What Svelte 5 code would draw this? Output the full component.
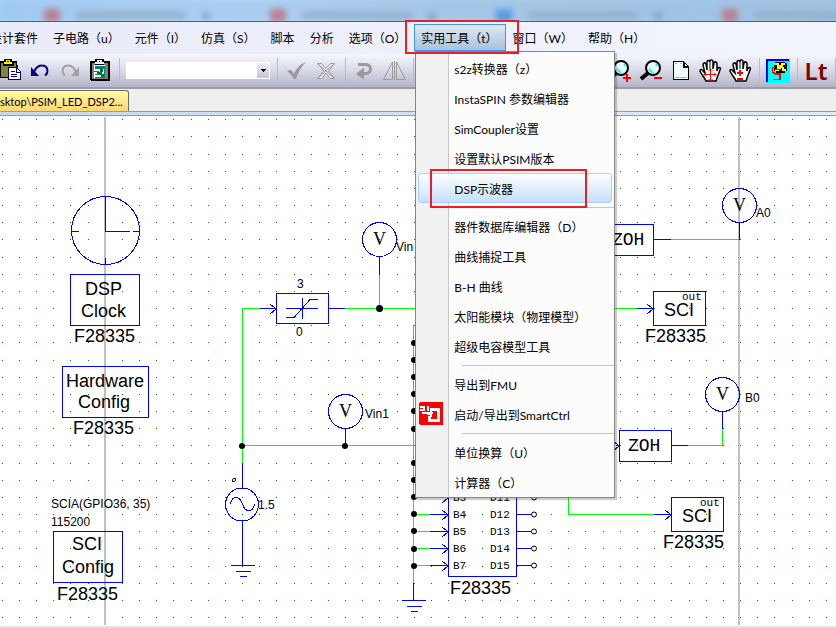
<script lang="ts">
  type Item = { label: string; icon?: boolean } | null;

  const menusBefore = ['设计套件', '子电路（u）', '元件（I）', '仿真（S）', '脚本', '分析', '选项（O）'];
  const menusAfter = ['窗口（W）', '帮助（H）'];

  // null draws a separator
  const toolItems: Item[] = [
    { label: 's2z转换器（z）' },
    { label: 'InstaSPIN 参数编辑器' },
    { label: 'SimCoupler设置' },
    { label: '设置默认PSIM版本' },
    { label: 'DSP示波器' },
    null,
    { label: '器件数据库编辑器（D）' },
    { label: '曲线捕捉工具' },
    { label: 'B-H 曲线' },
    { label: '太阳能模块（物理模型）' },
    { label: '超级电容模型工具' },
    null,
    { label: '导出到FMU' },
    { label: '启动/导出到SmartCtrl', icon: true },
    null,
    { label: '单位换算（U）' },
    { label: '计算器（C）' },
  ];

  let open = $state(true);
  let selected = $state('DSP示波器');

  const browserTabs = [1, 2, 3, 4];

  const pitch = 17.17;
  let dots = '';
  for (let j = 0; j < 30; j++) {
    for (let i = 0; i < 120; i++) {
      dots += `M${Math.floor(2.2 + i * pitch)} ${Math.floor(3.7 + j * pitch)}h1v1h-1z`;
    }
  }

  const railNodes = [227, 244, 261, 278, 295, 313, 347, 364, 381, 398, 415, 433, 450];
  const pins = [
    { y: 381, left: 'B3', right: 'D11' },
    { y: 398, left: 'B4', right: 'D12' },
    { y: 415, left: 'B5', right: 'D13' },
    { y: 432, left: 'B6', right: 'D14' },
    { y: 449, left: 'B7', right: 'D15' },
  ];
  const meters = [
    { x: 379, y: 123, name: 'Vin', nx: 396, ny: 135 },
    { x: 345, y: 295, name: 'Vin1', nx: 365, ny: 302 },
    { x: 739, y: 89, name: 'A0', nx: 756, ny: 101 },
    { x: 722, y: 278, name: 'B0', nx: 745, ny: 286 },
  ];
</script>

{#snippet arrow(x: number, y: number)}
  <path d="M{x - 6} {y - 4}l2 1 4 3.5-4 3.5-2 1M{x - 3} {y}h3" />
{/snippet}

{#snippet ground(x: number, y: number)}
  <path d="M{x - 12} {y}h24M{x - 7} {y + 6}h15M{x - 3} {y + 11}h7" />
{/snippet}

{#snippet outBox(x: number, y: number)}
  <rect class="box" x={x + 0.5} y={y + 0.5} width="52" height="34" />
  <text class="pin" x={x + 29} y={y + 9}>out</text>
  <text class="big" x={x + 11} y={y + 25}>SCI</text>
  <text class="big" x={x - 8} y={y + 51}>F28335</text>
{/snippet}

<div class="app">
  <div class="browser">
    {#each browserTabs as tab}
      <div class="browser-tab">
        <i class="favicon" class:blue={tab === 3}></i>
        <i class="title"></i>
        <i class="close"></i>
      </div>
    {/each}
  </div>

  <nav class="menubar">
    {#each menusBefore as menu}
      <button class="menu">{menu}</button>
    {/each}
    <div class="menu-open">
      <button class="menu" class:active={open} onclick={() => (open = !open)}>实用工具（t）</button>
      <span class="mark mark-menu"></span>
      {#if open}
        <div class="dropdown">
          {#each toolItems as item}
            {#if item}
              <button
                class="item"
                class:selected={item.label === selected}
                onmouseenter={() => (selected = item.label)}
              >
                <span class="item-icon">
                  {#if item.icon}
                    <svg width="24" height="24" shape-rendering="crispEdges">
                      <path fill="#f00" d="M1 0h22l1 1v21l-1 1H1l-1-1V1z" />
                      <path fill="none" stroke="#fff" stroke-width="3" d="M13 7.500h6.500v11h-9V14" />
                      <path fill="none" stroke="#fff" stroke-width="2" d="M1 5h3M1 8h3M5 4v5M3 11h11M9 4v5" />
                      <path fill="#fff" d="M8 10h5v3H8zM11 6h2v9h-2z" />
                    </svg>
                  {/if}
                </span>
                <span>{item.label}</span>
              </button>
            {:else}
              <hr />
            {/if}
          {/each}
          <span class="mark mark-item"></span>
        </div>
      {/if}
    </div>
    {#each menusAfter as menu}
      <button class="menu">{menu}</button>
    {/each}
  </nav>

  <div class="toolbar">
    <button class="tool" aria-label="Paste">
      <svg width="24" height="24" shape-rendering="crispEdges">
        <path fill="#000" d="M2 2h4V0h8v2h5v4h1v13H2z" />
        <path fill="#85853a" d="M3 4h15v14H3z" />
        <path fill="#000" d="M5 3h11v4H5z" />
        <path fill="#ff0" d="M8 1h4v2h2v2H6V3h2z" />
        <path fill="#000" d="M9 2h2v1H9z" />
        <path fill="#fff" stroke="#000080" d="M10.500 8.500h8l4 4v8h-12z" />
        <path stroke="#000080" d="M13 12.500h4M13 15.500h6M13 17.500h6M18.500 9v4h4" fill="none" />
      </svg>
    </button>
    <button class="tool" aria-label="Undo">
      <svg width="24" height="24">
        <path fill="none" stroke="#000080" stroke-width="2" d="M6 13c1-3 4-7 8-6.500 6 0 7 7 3 10" />
        <path fill="#000080" d="M3 8v9h8z" />
      </svg>
    </button>
    <button class="tool" aria-label="Redo">
      <svg width="24" height="24">
        <path fill="none" stroke="#a0a0a0" stroke-width="2" d="M18 13c-1-3-4-7-8-6.500-6 0-7 7-3 10" />
        <path fill="#a0a0a0" d="M21 8v9h-8z" />
      </svg>
    </button>
    <button class="tool" aria-label="Clipboard">
      <svg width="24" height="24" shape-rendering="crispEdges">
        <path fill="#000" d="M2 2h5V0h9v2h6v20H3l-1-1z" />
        <path fill="#808080" d="M4 4h16v16H4z" />
        <path fill="#fff" d="M6 6h11v13H6zM9 1h5v2h2v2H7V3h2z" />
        <path fill="#000" d="M11 2h1v1h-1zM7 5h9v1H7z" />
        <path fill="#008080" d="M7 7h10v3H7zM6 12h5v1H6zM7 15h6v1H7zM7 18h10v1H7zM16 9h1v9h-1z" />
        <path fill="#008000" d="M12 10h3v3h-3zM9 13h5v2H9zM13 15h3v3h-3z" />
      </svg>
    </button>
    <span class="sep"></span>
    <div class="combo">
      <select aria-label="Parameter"><option></option></select>
      <span class="combo-arrow"><svg width="5" height="3" shape-rendering="crispEdges"><path d="M0 0h5v1H4v1H3v1H2V2H1V1H0z" /></svg></span>
    </div>
    <span class="sep"></span>
    <button class="tool" aria-label="Apply">
      <svg width="24" height="24"><path fill="#999" d="M3 12l4-1 3 4C12 10 16 5 22 3c-5 5-8 10-10 17H10C8 17 6 14 3 12z" /></svg>
    </button>
    <button class="tool" aria-label="Cancel">
      <svg width="24" height="24">
        <path fill="#eee" stroke="#999" d="M3.500 4.500h4l4.500 5 4.500-5h4l-6 7.500 6 7.500h-4L12 14l-4.500 5.500h-4L10 12z" />
        <path stroke="#999" d="M4 5l16 14M20 5L4 19" />
      </svg>
    </button>
    <span class="sep"></span>
    <button class="tool" aria-label="Rotate">
      <svg width="24" height="24">
        <path fill="none" stroke="#999" stroke-width="3" d="M6 5.500h8c6 0 6 9 0 9h-3" />
        <path fill="#999" d="M12 8.500v12L4 15z" />
      </svg>
    </button>
    <button class="tool" aria-label="Mirror">
      <svg width="24" height="24"><path fill="none" stroke="#999" d="M10.500 3v17.500h-9zM14.500 3v17.500h9zM12.500 2v19" /></svg>
    </button>
    <span class="sep"></span>
    {#each ['Wire', 'Label', 'Text', 'Run', 'Zoom fit', 'Zoom area'] as name}
      <button class="tool" aria-label={name}></button>
    {/each}
    <span class="sep"></span>
    <button class="tool" aria-label="Zoom in">
      <svg width="24" height="24">
        <circle cx="13" cy="9" r="7" fill="#e8f8ff" stroke="#000" stroke-width="2" />
        <path stroke="#0ff" stroke-width="2" d="M9 10l4 4M16 5l2 2" />
        <path stroke="#000" stroke-width="4" d="M8 14l-6 6" />
        <path stroke="#f00" stroke-width="2" d="M15 19h8M19 15v8" />
      </svg>
    </button>
    <button class="tool" aria-label="Zoom out">
      <svg width="24" height="24">
        <circle cx="15" cy="9" r="7" fill="#e8f8ff" stroke="#000" stroke-width="2" />
        <path stroke="#0ff" stroke-width="2" d="M11 10l4 4M18 5l2 2" />
        <path stroke="#000" stroke-width="4" d="M10 14l-7 6" />
        <path stroke="#f00" stroke-width="2" d="M16 19h8" />
      </svg>
    </button>
    <button class="tool" aria-label="New page">
      <svg width="24" height="24" shape-rendering="crispEdges">
        <path fill="#f2fbff" stroke="#000" d="M5.500 2.500h10l5 5v13h-15z" />
        <path fill="none" stroke="#000" d="M15.500 3v5h5M16.500 3v4h4" />
        <path stroke="#0ff" d="M7 18.500h12M7 4.500h2M12 4.500h2" />
      </svg>
    </button>
    {#each ['Pan', 'Adjust'] as name}
      <button class="tool" aria-label={name}>
        <svg width="24" height="24">
          <path
            fill="#fff"
            stroke="#000"
            stroke-width="1.500"
            d="M8 22c-1-3-5-7-6-10 0-2 2-2 3 0l2 2-2-8c0-2 2-3 3-1l1 6V3c0-2 3-2 3 0V2c0-2 3-1 3 0v8l1-6c1-2 3-1 3 1v7l1-3c2-1 3 0 2 2l-3 8-1 3z"
          />
          <path stroke="#000" d="M12 3v7" />
          {#if name === 'Pan'}
            <path fill="none" stroke="#f00" d="M6 15.500h12M12.500 10v12M10.500 12l2-2 2 2M10.500 20l2 2 2-2M8 13.500l-2 2 2 2M16 13.500l2 2-2 2" />
          {:else}
            <path stroke="#f00" stroke-width="2" d="M9 14h6M12 11v6M9 20h6" />
          {/if}
        </svg>
      </button>
    {/each}
    <span class="sep"></span>
    <button class="tool" aria-label="Simview">
      <svg width="24" height="24" shape-rendering="crispEdges">
        <path fill="#0ff" d="M0 0h24v24H0z" />
        <path fill="#00f" d="M0 0h23v2H0zM0 0h2v23H0z" />
        <path fill="#000" d="M9 3h10v1h2v8h-2v2h-9v-2H8V6h1z" />
        <path fill="none" stroke="#ff0" stroke-width="2" d="M9 5h3v2h3M19 5h-3v4M9 11h3V9h3M20 11h-3V8" />
        <path fill="none" stroke="#f00" d="M9 8.500H6.500v5H9M9 10.500h6M7 14.500h7.500v6H7M9 15.500h4M13.500 15v5" />
      </svg>
    </button>
    <span class="sep"></span>
    <button class="tool lt">Lt</button>
    <span class="sep"></span>
  </div>

  <div class="tabs">
    <button class="doc-tab">sktop\PSIM_LED_DSP2...</button>
  </div>
  <div class="frame"></div>

  <main class="canvas">
    <svg class="sheet" width="100%" height="509">
      <path class="dots" d={dots} />
      <path class="page-line" d="M105 1v508M739 1v508" />

      <g class="wire">
        <path d="M260 192.500h-17.500V347M345 192.500h95M379.500 159v33M242 329.500h172M413.500 209v258" />
        <path d="M671 123.500h68M600 192.500h37M688 329.500h34.500V313M568.500 370v28.500H654" />
        {#each pins as pin}
          <path d="M414 {pin.y + 0.5}h16" />
        {/each}
      </g>

      <g class="part">
        <!-- DSP clock -->
        <circle cx="105.500" cy="114.500" r="34" />
        <path d="M105.500 80v35.500H130M133 115.500h7M71 115.500h8M105.500 142v7" />
        <rect x="70.500" y="158.500" width="69" height="51" />
        <rect x="62.500" y="250.500" width="86" height="51" />
        <rect x="53.500" y="415.500" width="69" height="51" />

        <!-- limiter -->
        <rect x="276.500" y="177.500" width="52" height="30" />
        <path d="M260 192.500h16M329 192.500h16M286 192.500h32M302.500 182v21" />
        <path d="M286 201.500h8l16-18h8" />
        {@render arrow(276, 192.5)}

        <!-- voltage source -->
        <path d="M242.500 347v25M242.500 405v44" />
        <circle cx="242" cy="388.500" r="16.500" />
        <circle cx="234" cy="364" r="1.500" />
        <path d="M230.500 388c1-8 9-9 12 0s10 9 12 0" />
        {@render ground(243, 449.5)}
        <path d="M413.500 467v17" />
        {@render ground(414, 484.5)}

        <!-- target board -->
        <rect x="448.500" y="180.500" width="68" height="280" />
        {#each pins as pin}
          <path d="M430 {pin.y + 0.5}h18M517 {pin.y + 0.5}h14" />
          {@render arrow(448, pin.y + 0.5)}
        {/each}

        <rect x="601.500" y="108.500" width="52" height="31" />
        <rect x="619.500" y="314.500" width="52" height="31" />
        <path d="M654 123.500h17M739.500 106v18M672 329.500h16M722.500 296v17M637 192.500h16M654 398.500h17M379.500 141v18M345.500 312v17" />
        {@render arrow(619, 329.5)}
        {@render arrow(653, 192.5)}
        {@render arrow(671, 398.5)}
        {#each meters as meter}
          <circle cx={meter.x + 0.5} cy={meter.y + 0.5} r="17" />
        {/each}
      </g>

      {@render outBox(653, 175)}
      {@render outBox(671, 381)}

      {#each railNodes as y}
        <circle cx="414" cy={y} r="3" />
      {/each}
      <circle cx="379.500" cy="192.500" r="3.500" />
      <circle cx="242" cy="330" r="3" />
      <circle cx="345" cy="330" r="3" />

      {#each meters as meter}
        <text class="volt" x={meter.x - 6} y={meter.y + 6}>V</text>
        <text class="small" x={meter.nx} y={meter.ny}>{meter.name}</text>
      {/each}

      {#each pins as pin}
        <circle class="terminal" cx="534" cy={pin.y + 0.5} r="2.500" />
        <text class="pin" x="453" y={pin.y + 4}>{pin.left}</text>
        <text class="pin" x="490" y={pin.y + 4}>{pin.right}</text>
      {/each}

      <text class="big" x="85" y="179">DSP</text>
      <text class="big" x="81" y="201">Clock</text>
      <text class="big" x="74" y="226">F28335</text>
      <text class="big" x="66" y="271">Hardware</text>
      <text class="big" x="78" y="292">Config</text>
      <text class="big" x="73" y="318">F28335</text>
      <text class="small" x="51" y="392">SCIA(GPIO36, 35)</text>
      <text class="small" x="51" y="410">115200</text>
      <text class="big" x="72" y="434">SCI</text>
      <text class="big" x="62" y="457">Config</text>
      <text class="big" x="57" y="484">F28335</text>
      <text class="big" x="450" y="478">F28335</text>
      <text class="small" x="297" y="172">3</text>
      <text class="small" x="296" y="220">0</text>
      <text class="small" x="258" y="393">1.5</text>
      <text class="block" x="612" y="129">ZOH</text>
      <text class="block" x="628" y="335">ZOH</text>
    </svg>
  </main>
  <div class="bottom"></div>
</div>

<style>
  :global(body) {
    margin: 0;
    background: #fff;
  }

  .app {
    min-height: 100vh;
    display: flex;
    flex-direction: column;
    overflow: hidden;
    font-family: Lato, 'Noto Sans CJK SC', sans-serif;
    font-size: 12px;
    color: #000;
  }

  button {
    font: inherit;
    color: inherit;
    border: none;
    background: none;
    padding: 0;
    white-space: nowrap;
  }

  .browser {
    display: flex;
    height: 21px;
    overflow: hidden;
    background: linear-gradient(90deg, #a9d3fa, #b5d8fb 30%, #add0f0 50%, #a5c8e8);
    border-bottom: 1px solid #50606f;
  }

  .browser-tab {
    display: flex;
    flex: 0 0 226px;
    align-items: center;
    gap: 16px;
    box-sizing: border-box;
    padding: 10px 16px 0 44px;
    background: rgba(130, 165, 200, 0.2);
    filter: blur(3px);
  }

  .favicon {
    width: 16px;
    height: 13px;
    background: #b8808f;
  }

  .favicon.blue {
    background: #5a98de;
  }

  .title {
    flex: 1;
    height: 7px;
    background: #92aec9;
  }

  .close {
    width: 8px;
    height: 6px;
    background: #7f9ab5;
  }

  .menubar {
    display: flex;
    align-items: flex-start;
    box-sizing: border-box;
    height: 32px;
    padding-top: 2px;
    margin-left: -17px;
    background: linear-gradient(90deg, #e9ebf9, #f2f4fd);
  }

  .menu {
    display: block;
    height: 27px;
    padding: 0 8px 0 7px;
    flex: none;
  }

  .menu.active {
    background: linear-gradient(#e4eaf2, #c3d5e7 50%, #a4c1dc);
    box-shadow: inset 0 0 0 1px #3c96f0;
  }

  .menu-open {
    position: relative;
    flex: none;
  }

  .mark {
    position: absolute;
    border: 2px solid #ee1c25;
    pointer-events: none;
  }

  .mark-menu {
    inset: -4px -13px -3px -9px;
    z-index: 3;
  }

  .mark-item {
    top: 117px;
    left: 14px;
    right: 27px;
    height: 35px;
  }

  .dropdown {
    position: absolute;
    z-index: 2;
    top: 27px;
    left: 1px;
    width: 198px;
    padding: 1px 0 0;
    border: 1px solid #868686;
    background: linear-gradient(90deg, #f1f1f1 32px, #c8c8c8 32px, #c8c8c8 33px, #fcfcfc 33px);
    box-shadow: 2px 2px 1px rgba(0, 0, 0, 0.2);
  }

  .item {
    display: flex;
    align-items: center;
    box-sizing: border-box;
    width: 194px;
    height: 30px;
    margin: 0 2px;
    border: 1px solid transparent;
    border-radius: 3px;
  }

  .item.selected {
    border-color: #aecff7;
    background: linear-gradient(#fbfdff, #e3f0fd 50%, #c4e1fd);
  }

  .item-icon {
    display: flex;
    width: 35px;
    flex: none;
  }

  hr {
    height: 1px;
    margin: 4px 0 3px 46px;
    border: none;
    background: #c5c5c5;
  }

  .toolbar {
    display: flex;
    align-items: center;
    height: 33px;
    margin-left: -5px;
    background: linear-gradient(#f6f7fc, #dcdde9 45%, #b4b4c9);
    border-bottom: 2px solid #9b9ba3;
  }

  .tool {
    display: flex;
    align-items: center;
    justify-content: center;
    width: 30px;
    height: 30px;
    flex: none;
  }

  .lt {
    font-family: 'Noto Sans', sans-serif;
    font-size: 24px;
    font-weight: 600;
    color: #800000;
  }

  .sep {
    width: 1px;
    height: 26px;
    margin: 0 3px 0 4px;
    flex: none;
    background: #b9bac8;
  }

  .combo {
    display: grid;
    grid-template-columns: 1fr 13px;
    width: 144px;
    height: 17px;
    margin: 0 3px;
    flex: none;
    background: #fff;
  }

  select {
    grid-area: 1 / 1 / 2 / 3;
    min-width: 0;
    height: 17px;
    appearance: none;
    border: none;
    background: none;
    font: inherit;
  }

  .combo-arrow {
    grid-area: 1 / 2;
    display: flex;
    height: 15px;
    margin: 1px 1px 1px 0;
    align-items: center;
    justify-content: center;
    background: linear-gradient(#f0f1f8, #c3c4d6);
    pointer-events: none;
  }

  .tabs {
    display: flex;
    align-items: flex-end;
    height: 22px;
    background: #efefef;
    border-bottom: 1px solid #9a9a9a;
  }

  .doc-tab {
    box-sizing: border-box;
    width: 129px;
    height: 21px;
    font-size: 11px;
    text-align: left;
    border: 1px solid #6c6c6c;
    border-width: 1px 1px 0 0;
    border-radius: 0 3px 0 0;
    background: linear-gradient(#fffb9f, #ffe88c 50%, #ffd873);
  }

  .frame {
    height: 3px;
    background: linear-gradient(90deg, #c9d8ee, #e2ecf8);
    border-bottom: 1px solid #9a9a9a;
  }

  .canvas {
    flex: 1;
    background: #fff;
  }

  .sheet {
    display: block;
  }

  .dots {
    fill: #008000;
    shape-rendering: crispEdges;
  }

  .page-line {
    stroke: #c0c0c0;
    stroke-width: 2;
  }

  .wire path {
    fill: none;
    stroke: #0f0;
    shape-rendering: crispEdges;
  }

  .part path,
  .part circle,
  .part rect,
  .box {
    fill: none;
    stroke: #00f;
    shape-rendering: crispEdges;
  }

  .terminal {
    fill: #fff;
    stroke: #000;
  }

  .big,
  .small {
    font-family: 'Liberation Sans', sans-serif;
  }

  .big {
    font-size: 18px;
  }

  .small {
    font-size: 12px;
  }

  .volt {
    font-family: 'Liberation Serif', serif;
    font-size: 18px;
  }

  .pin,
  .block {
    font-family: 'Liberation Mono', monospace;
    font-size: 11px;
  }

  .block {
    font-size: 18px;
  }

  .bottom {
    height: 2px;
    background: #e3e3e3;
  }
</style>
